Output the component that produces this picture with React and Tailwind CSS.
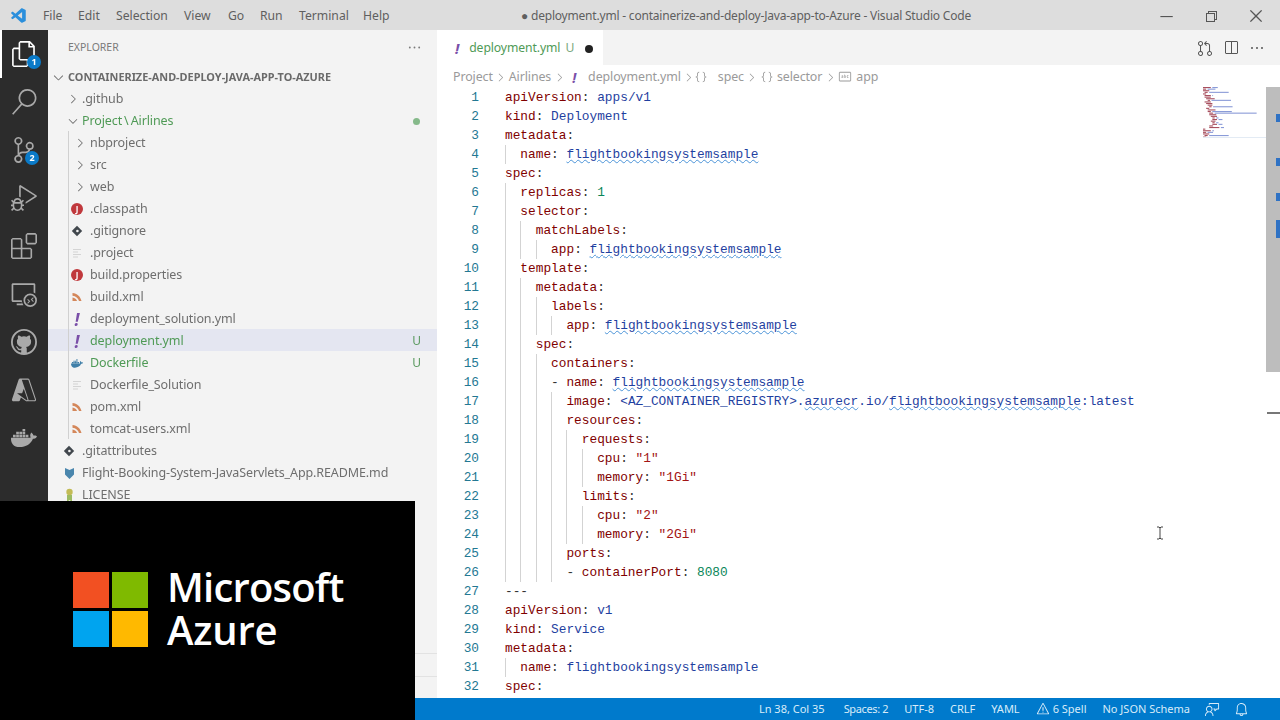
import React from "react";
import {
  VscFiles,
  VscSearch,
  VscSourceControl,
  VscDebugAlt,
  VscExtensions,
  VscRemoteExplorer,
  VscGithub,
  VscAzure,
  VscGitPullRequest,
  VscSplitHorizontal,
  VscEllipsis,
  VscChevronRight,
  VscChevronDown,
  VscFeedback,
  VscBell,
  VscWarning,
  VscChromeMinimize,
  VscChromeRestore,
  VscChromeClose,
  VscJson,
  VscSymbolString,
  VscVscode,
} from "react-icons/vsc";
import { FaDocker } from "react-icons/fa";

const UI_FONT = "font-['Noto_Sans',sans-serif]";

const MENU = [
  { label: "File", w: "w-[35px]" },
  { label: "Edit", w: "w-[38px]" },
  { label: "Selection", w: "w-[68px]" },
  { label: "View", w: "w-[44px]" },
  { label: "Go", w: "w-[32px]" },
  { label: "Run", w: "w-[39px]" },
  { label: "Terminal", w: "w-[64px]" },
  { label: "Help", w: "w-[40px]" },
];

const ACTIVITY = [
  { Icon: VscFiles, badge: "1", active: true },
  { Icon: VscSearch },
  { Icon: VscSourceControl, badge: "2" },
  { Icon: VscDebugAlt },
  { Icon: VscExtensions },
  { Icon: VscRemoteExplorer },
  { Icon: VscGithub },
  { Icon: VscAzure },
  { Icon: FaDocker },
];

const TREE = [
  { name: ".github", depth: 1, chevron: "right" },
  { name: "Project\u2009\\\u2009Airlines", depth: 1, chevron: "down", green: true, dot: true },
  { name: "nbproject", depth: 2, chevron: "right" },
  { name: "src", depth: 2, chevron: "right" },
  { name: "web", depth: 2, chevron: "right" },
  { name: ".classpath", depth: 2, icon: "java" },
  { name: ".gitignore", depth: 2, icon: "git" },
  { name: ".project", depth: 2, icon: "lines" },
  { name: "build.properties", depth: 2, icon: "java" },
  { name: "build.xml", depth: 2, icon: "xml" },
  { name: "deployment_solution.yml", depth: 2, icon: "yaml" },
  { name: "deployment.yml", depth: 2, icon: "yaml", green: true, status: "U", selected: true },
  { name: "Dockerfile", depth: 2, icon: "docker", green: true, status: "U" },
  { name: "Dockerfile_Solution", depth: 2, icon: "lines" },
  { name: "pom.xml", depth: 2, icon: "xml" },
  { name: "tomcat-users.xml", depth: 2, icon: "xml" },
  { name: ".gitattributes", depth: 1, icon: "git" },
  { name: "Flight-Booking-System-JavaServlets_App.README.md", depth: 1, icon: "md" },
  { name: "LICENSE", depth: 1, icon: "license" },
];

const NAME = "flightbookingsystemsample";

// i = indent level (2 chars each), t = value colour
const CODE = [
  { i: 0, k: "apiVersion", v: "apps/v1" },
  { i: 0, k: "kind", v: "Deployment" },
  { i: 0, k: "metadata" },
  { i: 1, k: "name", v: NAME, wavy: true },
  { i: 0, k: "spec" },
  { i: 1, k: "replicas", v: "1", t: "num" },
  { i: 1, k: "selector" },
  { i: 2, k: "matchLabels" },
  { i: 3, k: "app", v: NAME, wavy: true },
  { i: 1, k: "template" },
  { i: 2, k: "metadata" },
  { i: 3, k: "labels" },
  { i: 4, k: "app", v: NAME, wavy: true },
  { i: 2, k: "spec" },
  { i: 3, k: "containers" },
  { i: 3, dash: true, k: "name", v: NAME, wavy: true },
  { i: 4, k: "image", image: true },
  { i: 4, k: "resources" },
  { i: 5, k: "requests" },
  { i: 6, k: "cpu", v: '"1"', t: "str" },
  { i: 6, k: "memory", v: '"1Gi"', t: "str" },
  { i: 5, k: "limits" },
  { i: 6, k: "cpu", v: '"2"', t: "str" },
  { i: 6, k: "memory", v: '"2Gi"', t: "str" },
  { i: 4, k: "ports" },
  { i: 4, dash: true, k: "containerPort", v: "8080", t: "num" },
  { i: 0, plain: "---" },
  { i: 0, k: "apiVersion", v: "v1" },
  { i: 0, k: "kind", v: "Service" },
  { i: 0, k: "metadata" },
  { i: 1, k: "name", v: NAME },
  { i: 0, k: "spec" },
];

function FileIcon({ type }) {
  if (type === "java") {
    return (
      <span className="w-[12px] h-[12px] rounded-full bg-[#c0383c] text-white text-[8px] font-bold flex items-center justify-center">
        J
      </span>
    );
  }
  if (type === "git") {
    return (
      <svg width="12" height="12" viewBox="0 0 12 12">
        <path d="M6 .8 11.2 6 6 11.2.8 6z" fill="#41474d" />
        <circle cx="6.4" cy="6" r="1.3" fill="#f3f3f3" />
      </svg>
    );
  }
  if (type === "lines") {
    return (
      <svg width="12" height="12" viewBox="0 0 12 12" stroke="#d4d4d4" strokeWidth="1.2">
        <path d="M2 2.5h8M2 5h5M2 7.5h8M2 10h5" />
      </svg>
    );
  }
  if (type === "xml") {
    return (
      <svg width="12" height="12" viewBox="0 0 12 12">
        <path d="M1.5 2c4.5.2 8 3.6 9 8H8C7.2 7.4 4.8 5.2 1.5 4.8z" fill="#d4875a" />
        <path d="M1.5 6.4c2.4.3 4 1.7 4.6 3.6H1.5z" fill="#d4875a" />
      </svg>
    );
  }
  if (type === "yaml") {
    return <span className="text-[#7a4fa8] text-[17px] font-bold italic leading-none">!</span>;
  }
  if (type === "docker") {
    return <FaDocker size={15} className="text-[#3f7fa8]" />;
  }
  if (type === "md") {
    return (
      <svg width="11" height="13" viewBox="0 0 11 13">
        <path d="M1 1 5.5 3 10 1v6.5L5.5 12 1 7.5z" fill="#4a86ad" />
      </svg>
    );
  }
  return (
    <svg width="11" height="14" viewBox="0 0 11 14">
      <circle cx="5.5" cy="4" r="3.2" fill="#c2bb55" />
      <path d="M3 7h5v7L5.5 12 3 14z" fill="#9cbb62" />
    </svg>
  );
}

function TreeRow({ row }) {
  const chevronLeft = row.depth === 1 ? "ml-[18px]" : "ml-[25px]";
  const chevronWidth = row.depth === 1 ? "w-[16px]" : "w-[17px]";
  const iconBox = row.depth === 1 ? "ml-[15px] mr-[7px]" : "ml-[23px] mr-[7px]";
  return (
    <div
      className={`h-[22px] shrink-0 flex items-center pt-[2px] pr-[16px] text-[12.5px] tracking-[-0.1px] ${
        row.selected ? "bg-[#e4e6f1]" : ""
      } ${row.green ? "text-[#4f9a56]" : "text-[#6e6e6e]"}`}
    >
      {row.chevron ? (
        <span className={`${chevronLeft} ${chevronWidth} flex items-center text-[#6b6b6b]`}>
          {row.chevron === "right" ? <VscChevronRight size={14} /> : <VscChevronDown size={14} />}
        </span>
      ) : (
        <span className={`${iconBox} w-[12px] flex items-center justify-center`}>
          <FileIcon type={row.icon} />
        </span>
      )}
      <span className="flex-1 whitespace-nowrap">{row.name}</span>
      {row.dot && <span className="w-[7px] h-[7px] mr-[1px] rounded-full bg-[#85b98a]" />}
      {row.status && <span className="text-[12px] text-[#5b9a60]">{row.status}</span>}
    </div>
  );
}

function Value({ line }) {
  if (line.image) {
    return (
      <span className="text-[#1f3fa0]">
        {"<AZ_CONTAINER_REGISTRY>."}
        <span className="underline decoration-wavy decoration-[#4b94d8] decoration-1">azurecr</span>
        {".io/"}
        <span className="underline decoration-wavy decoration-[#4b94d8] decoration-1">{NAME}</span>
        {":latest"}
      </span>
    );
  }
  if (!line.v) return null;
  const colour =
    line.t === "num" ? "text-[#098658]" : line.t === "str" ? "text-[#a31515]" : "text-[#1f3fa0]";
  return (
    <span
      className={`${colour} ${
        line.wavy ? "underline decoration-wavy decoration-[#4b94d8] decoration-1" : ""
      }`}
    >
      {line.v}
    </span>
  );
}

function CodeLine({ line, n }) {
  return (
    <div className="h-[19px] shrink-0 flex items-stretch leading-[19px] whitespace-pre">
      <span className="w-[42px] text-right text-[#237893]">{n}</span>
      <span className="w-[26px]" />
      {Array.from({ length: line.i }).map((_, idx) => (
        <span key={idx} className="w-[15.36px] border-l border-[#d3d3d3]" />
      ))}
      {line.plain ? (
        <span className="text-[#333333]">{line.plain}</span>
      ) : (
        <span className="text-[#333333]">
          {line.dash ? "- " : ""}
          <span className="text-[#800000]">{line.k}</span>:{line.v || line.image ? " " : ""}
          <Value line={line} />
        </span>
      )}
    </div>
  );
}

function Minimap() {
  return (
    <svg className="absolute left-[1203px] top-[87px]" width="63" height="54">
      {CODE.map((line, idx) => {
        const y = idx * 1.6;
        const x = line.i * 1.56;
        const kw = (line.k || "---").length * 0.78;
        const vw = line.image ? 42 : (line.v || "").length * 0.78;
        return (
          <g key={idx}>
            <rect x={x} y={y} width={kw} height="1.1" fill="#a8505f" />
            {vw > 0 && <rect x={x + kw + 1.5} y={y} width={vw} height="1.1" fill="#8a9bd8" />}
          </g>
        );
      })}
      <rect x="0" y="50" width="63" height="1" fill="#e3ebf4" />
    </svg>
  );
}

function Crumb() {
  return <VscChevronRight size={13} className="mx-[1.5px]" />;
}

export default function App() {
  return (
    <div className="relative w-[1280px] h-[720px] overflow-hidden bg-white">
      <div className={`w-[1280px] h-[720px] flex flex-col blur-[0.6px] ${UI_FONT}`}>
        {/* TITLE BAR */}
        <div className="h-[30px] shrink-0 bg-[#dddddd] flex items-center pt-[2px] text-[12.2px] text-[#5f5f5f]">
          <span className="w-[43px] pl-[10px] flex items-center">
            <VscVscode size={18} className="text-[#2b8fdc]" />
          </span>
          {MENU.map((m) => (
            <span key={m.label} className={m.w}>
              {m.label}
            </span>
          ))}
          <span className="ml-[118px] w-[460px] whitespace-nowrap text-[12px] tracking-[-0.2px]">
            ● deployment.yml - containerize-and-deploy-Java-app-to-Azure - Visual Studio Code
          </span>
          <div className="flex-1 flex items-center justify-end pr-[15px] gap-[28px] text-[#555555]">
            <VscChromeMinimize size={18} />
            <VscChromeRestore size={16} />
            <VscChromeClose size={18} />
          </div>
        </div>

        <div className="flex-1 min-h-0 flex">
          {/* ACTIVITY BAR */}
          <div className="w-[48px] shrink-0 bg-[#2c2c2c] flex flex-col">
            {ACTIVITY.map(({ Icon, badge, active }, idx) => (
              <div
                key={idx}
                className={`relative h-[48px] shrink-0 flex items-center justify-center ${
                  active ? "border-l-2 border-white text-white pr-[2px]" : "text-[#a9a9a9]"
                }`}
              >
                <Icon size={26} />
                {badge && (
                  <span className="absolute left-[25px] top-[25px] w-[14px] h-[14px] rounded-full bg-[#0a7ac8] text-white text-[9px] font-bold flex items-center justify-center">
                    {badge}
                  </span>
                )}
              </div>
            ))}
          </div>

          {/* SIDEBAR */}
          <div className="relative w-[389px] shrink-0 bg-[#f3f3f3] flex flex-col">
            <div className="h-[35px] shrink-0 flex items-center justify-between pl-[20px] pr-[15px] text-[10.5px] text-[#7b7b7b]">
              <span>EXPLORER</span>
              <VscEllipsis size={15} />
            </div>
            <div className="h-[22px] shrink-0 flex items-center pt-[2px] pl-[3px] text-[10.9px] font-bold text-[#6a6a6a] whitespace-nowrap">
              <VscChevronDown size={15} className="mr-[2px]" />
              CONTAINERIZE-AND-DEPLOY-JAVA-APP-TO-AZURE
            </div>
            {TREE.map((row) => (
              <TreeRow key={row.name} row={row} />
            ))}
            <span className="absolute left-[20px] top-[101px] w-[1px] h-[308px] bg-[#d0d0d0]" />
            <span className="absolute left-[367px] top-[623px] w-[22px] h-[1px] bg-[#e2e2e2]" />
            <span className="absolute left-[367px] top-[646px] w-[22px] h-[1px] bg-[#e2e2e2]" />
          </div>

          {/* EDITOR */}
          <div className="flex-1 min-w-0 flex flex-col bg-white">
            <div className="h-[35px] shrink-0 bg-[#f3f3f3] flex items-stretch">
              <div className="w-[166px] bg-white flex items-center pt-[2px] pl-[18px] text-[12.2px] tracking-[-0.1px] text-[#4f9a56]">
                <span className="text-[#7a4fa8] text-[15px] font-bold italic mr-[10px]">!</span>
                deployment.yml
                <span className="ml-[5px] text-[#7aa87e]">U</span>
                <span className="ml-[11px] w-[8px] h-[8px] rounded-full bg-[#222222]" />
              </div>
              <div className="flex-1 flex items-center justify-end pr-[15px] gap-[10px] text-[#555555]">
                <VscGitPullRequest size={16} />
                <VscSplitHorizontal size={16} />
                <VscEllipsis size={16} />
              </div>
            </div>
            <div className="h-[22px] shrink-0 flex items-center pt-[2px] pl-[16px] text-[12.4px] tracking-[-0.1px] text-[#9a9a9a] whitespace-nowrap">
              Project
              <Crumb />
              Airlines
              <Crumb />
              <span className="text-[#7a4fa8] text-[14px] font-bold italic ml-[5px] mr-[12px]">!</span>
              deployment.yml
              <Crumb />
              <VscJson size={14} className="-ml-[3px] mr-[10px]" />
              spec
              <Crumb />
              <VscJson size={14} className="mr-[3px]" />
              selector
              <Crumb />
              <VscSymbolString size={14} className="mr-[4px]" />
              app
            </div>
            <div className="flex-1 min-h-0 overflow-hidden flex flex-col pt-px font-['Liberation_Mono',monospace] text-[12.8px]">
              {CODE.map((line, idx) => (
                <CodeLine key={idx} line={line} n={idx + 1} />
              ))}
            </div>
          </div>
        </div>

        {/* STATUS BAR */}
        <div className="h-[22px] shrink-0 bg-[#007acc] flex items-center justify-end pr-[31px] text-[11px] text-[#d8ecf9] gap-[16px] whitespace-nowrap">
          <span className="mr-[3px]">Ln 38, Col 35</span>
          <span className="tracking-[-0.35px]">Spaces: 2</span>
          <span>UTF-8</span>
          <span>CRLF</span>
          <span>YAML</span>
          <span className="flex items-center gap-[3px]">
            <VscWarning size={14} />6 Spell
          </span>
          <span>No JSON Schema</span>
          <VscFeedback size={15} className="-ml-[1px]" />
          <VscBell size={15} className="-ml-[2px]" />
        </div>

        {/* minimap + scrollbar overlay */}
        <Minimap />
        <div className="absolute left-[1266px] top-[87px] w-[14px] h-[285px] bg-[#bdbdbd]">
          <span className="absolute right-0 top-[27px] w-[4px] h-[8px] bg-[#2f72c4]" />
          <span className="absolute right-0 top-[71px] w-[4px] h-[8px] bg-[#2f72c4]" />
          <span className="absolute right-0 top-[106px] w-[4px] h-[8px] bg-[#2f72c4]" />
          <span className="absolute right-0 top-[133px] w-[4px] h-[18px] bg-[#2f72c4]" />
        </div>
        <span className="absolute left-[1267px] top-[412px] w-[13px] h-[2px] bg-[#777777]" />
        <svg className="absolute left-[1156px] top-[526px]" width="8" height="14" stroke="#444444" fill="none">
          <path d="M1 1h2l1 1 1-1h2M4 2v10M1 13h2l1-1 1 1h2" />
        </svg>
      </div>

      {/* AZURE OVERLAY */}
      <div className="absolute left-0 top-[501px] w-[415px] h-[219px] bg-black flex pl-[73px] pt-[71px]">
        <div className="grid grid-cols-[36px_36px] grid-rows-[36px_36px] gap-[3px] h-[75px]">
          <span className="bg-[#f25022]" />
          <span className="bg-[#7fba00]" />
          <span className="bg-[#00a4ef]" />
          <span className="bg-[#ffb900]" />
        </div>
        <div className="ml-[19px] -mt-[7px] flex flex-col font-['Open_Sans',sans-serif] font-semibold text-white text-[40px] leading-[43px]">
          <span className="tracking-[-0.8px]">Microsoft</span>
          <span className="tracking-[-0.2px]">Azure</span>
        </div>
      </div>
    </div>
  );
}
